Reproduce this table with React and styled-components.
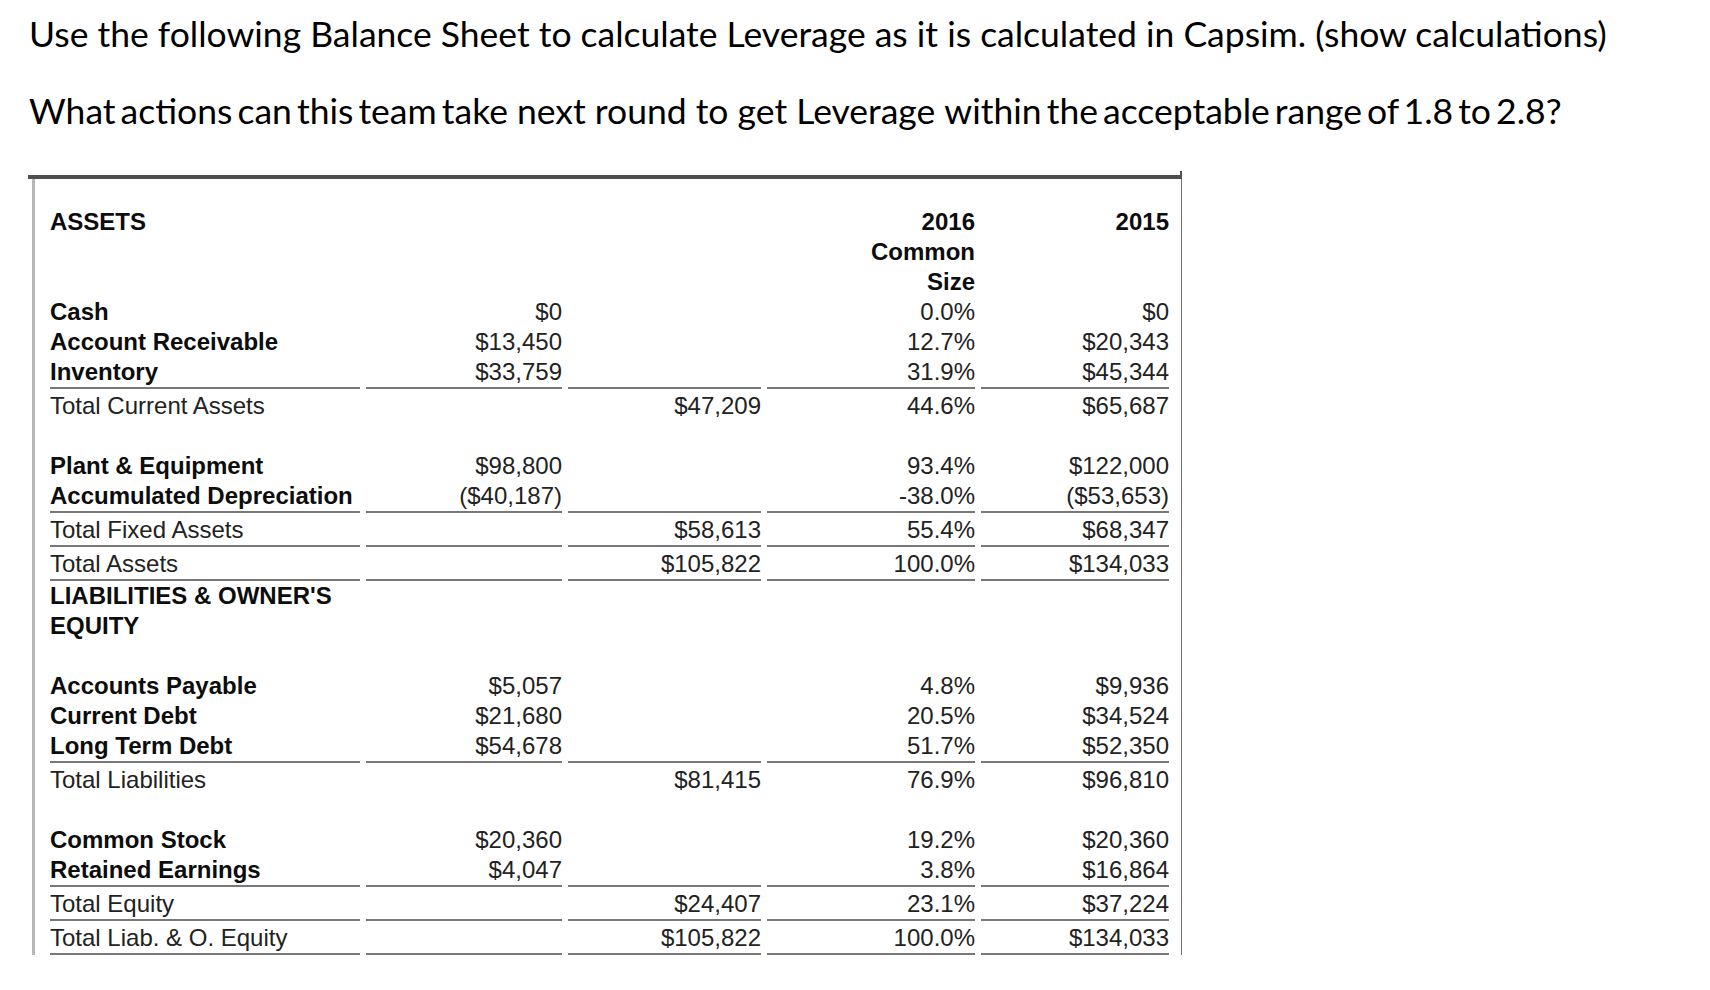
import React from "react";
import styled, { createGlobalStyle } from "styled-components";

const GlobalStyle = createGlobalStyle`
  html, body {
    margin: 0;
    padding: 0;
    background: #ffffff;
  }
`;

const Page = styled.main`
  padding: 14px 0 0 28px;
  font-family: "Liberation Sans", Arial, sans-serif;
  color: #111;
`;

const Intro = styled.div`
  display: flex;
  flex-direction: column;
  gap: 37px;
  padding-left: 1px;
  margin-bottom: 44px;
`;

const Question = styled.p`
  margin: 0;
  font-family: Lato, "Open Sans", sans-serif;
  font-size: 35.5px;
  line-height: 40px;
  color: #000;
  white-space: nowrap;
`;

const Tight = styled.span`
  word-spacing: ${p => p.$squeeze || -4}px;
`;

const Frame = styled.section`
  position: relative;
  width: 1154px;
  border-top: 4px solid #4e4e4e;

  &::after {
    content: "";
    position: absolute;
    right: 0;
    top: -8px;
    width: 2px;
    height: 5px;
    background: #4e4e4e;
  }
`;

const Sheet = styled.div`
  margin-left: 4px;
  border-left: 3px solid #b7b7b7;
  border-right: 1px solid #6e6e6e;
  padding: 28px 6px 0 9px;
`;

const Table = styled.table`
  table-layout: fixed;
  width: 1131px;
  border-collapse: separate;
  border-spacing: 6px 0;
  font-size: 24px;
  line-height: 30px;
`;

const Col = styled.col`
  width: ${p => p.$w}px;
`;

const Cell = styled.td`
  padding: ${p => (p.$total ? "2px 0 0" : "0")};
  height: 30px;
  vertical-align: top;
  text-align: ${p => (p.$label ? "left" : "right")};
  font-weight: ${p => (p.$bold ? 700 : 400)};
  color: ${p => (p.$bold ? "#0d0d0d" : "#222")};
  border-bottom: ${p => (p.$line ? "2px solid #787878" : "none")};
  white-space: ${p => (p.$label ? "normal" : "nowrap")};
`;

const Blank = styled.td`
  height: 30px;
  padding: 0;
`;

const widths = [310, 196, 193, 208, 188];

const rows = [
  { kind: "item", label: "Cash", v: ["$0", "", "0.0%", "$0"] },
  { kind: "item", label: "Account Receivable", v: ["$13,450", "", "12.7%", "$20,343"] },
  { kind: "item", label: "Inventory", v: ["$33,759", "", "31.9%", "$45,344"], line: true },
  { kind: "total", label: "Total Current Assets", v: ["", "$47,209", "44.6%", "$65,687"] },
  { kind: "blank" },
  { kind: "item", label: "Plant & Equipment", v: ["$98,800", "", "93.4%", "$122,000"] },
  { kind: "item", label: "Accumulated Depreciation", v: ["($40,187)", "", "-38.0%", "($53,653)"], line: true },
  { kind: "total", label: "Total Fixed Assets", v: ["", "$58,613", "55.4%", "$68,347"], line: true },
  { kind: "total", label: "Total Assets", v: ["", "$105,822", "100.0%", "$134,033"], line: true },
  { kind: "heading", label: "LIABILITIES & OWNER'S EQUITY" },
  { kind: "blank" },
  { kind: "item", label: "Accounts Payable", v: ["$5,057", "", "4.8%", "$9,936"] },
  { kind: "item", label: "Current Debt", v: ["$21,680", "", "20.5%", "$34,524"] },
  { kind: "item", label: "Long Term Debt", v: ["$54,678", "", "51.7%", "$52,350"], line: true },
  { kind: "total", label: "Total Liabilities", v: ["", "$81,415", "76.9%", "$96,810"] },
  { kind: "blank" },
  { kind: "item", label: "Common Stock", v: ["$20,360", "", "19.2%", "$20,360"] },
  { kind: "item", label: "Retained Earnings", v: ["$4,047", "", "3.8%", "$16,864"], line: true },
  { kind: "total", label: "Total Equity", v: ["", "$24,407", "23.1%", "$37,224"], line: true },
  { kind: "total", label: "Total Liab. & O. Equity", v: ["", "$105,822", "100.0%", "$134,033"], line: true }
];

const SheetRow = ({ row }) => {
  if (row.kind === "blank") {
    return (
      <tr>
        <Blank colSpan={5} />
      </tr>
    );
  }
  if (row.kind === "heading") {
    return (
      <tr>
        <Cell $label $bold>
          {row.label}
        </Cell>
        <Cell />
        <Cell />
        <Cell />
        <Cell />
      </tr>
    );
  }
  const total = row.kind === "total";
  return (
    <tr>
      <Cell $label $bold={!total} $total={total} $line={row.line}>
        {row.label}
      </Cell>
      {row.v.map((value, i) => (
        <Cell key={i} $total={total} $line={row.line}>
          {value}
        </Cell>
      ))}
    </tr>
  );
};

export default function App() {
  return (
    <>
      <GlobalStyle />
      <Page>
        <Intro>
          <Question>
            Use the following Balance Sheet to calculate Leverage as it is
            calculated in Capsim. (show calculations)
          </Question>
          <Question>
            <Tight>What actions can this team take</Tight> next round to get
            Leverage{" "}
            <Tight>within the acceptable range of 1.8 to 2.8?</Tight>
          </Question>
        </Intro>

        <Frame>
          <Sheet>
            <Table>
              <colgroup>
                {widths.map((w, i) => (
                  <Col key={i} $w={w} />
                ))}
              </colgroup>
              <tbody>
                <tr>
                  <Cell $label $bold>
                    ASSETS
                  </Cell>
                  <Cell />
                  <Cell />
                  <Cell $bold>
                    2016
                    <br />
                    Common
                    <br />
                    Size
                  </Cell>
                  <Cell $bold>2015</Cell>
                </tr>
                {rows.map((row, i) => (
                  <SheetRow key={i} row={row} />
                ))}
              </tbody>
            </Table>
          </Sheet>
        </Frame>
      </Page>
    </>
  );
}
